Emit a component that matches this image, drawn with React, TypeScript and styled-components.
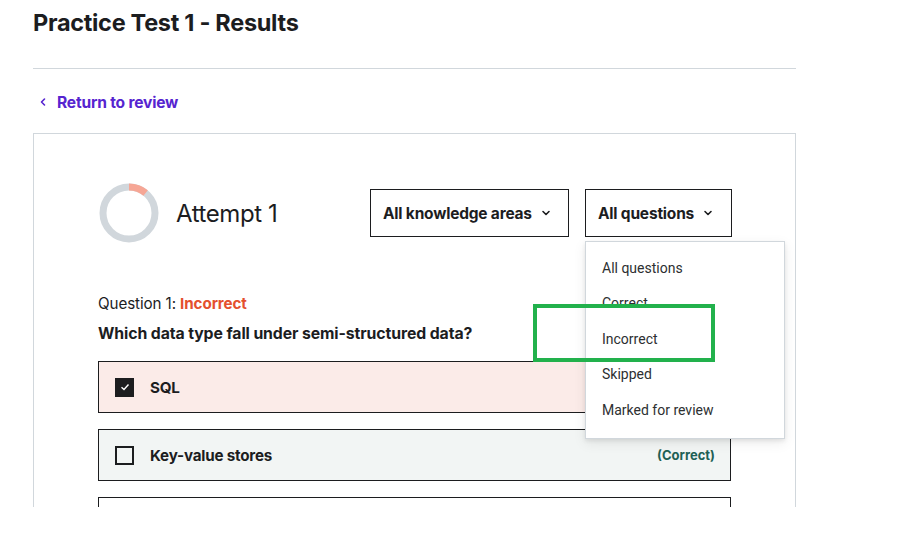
import styled, { createGlobalStyle } from "styled-components";

const GlobalStyle = createGlobalStyle`
  html, body { margin: 0; padding: 0; background: #fff; }
  body { font-family: Inter, "Noto Sans", sans-serif; color: #2d2f31; }
  * { box-sizing: border-box; }
`;

const Page = styled.div`
  width: 903px;
  height: 507px;
  overflow: hidden;
  padding: 0 107px 0 33px;
  position: relative;
`;

const Title = styled.h1`
  margin: 0;
  padding-top: 8px;
  height: 69px;
  font-size: 23.5px;
  font-weight: 700;
  letter-spacing: -0.3px;
  color: #1c1d1f;
  border-bottom: 1px solid #d1d7dc;
`;

const BackLink = styled.a`
  display: flex;
  align-items: center;
  gap: 9px;
  height: 64px;
  padding-left: 5px;
  padding-top: 2px;
  color: #5624d0;
  font-size: 15.6px;
  font-weight: 700;
  letter-spacing: -0.2px;
  text-decoration: none;
`;

const Card = styled.div`
  border: 1px solid #d1d7dc;
  border-bottom: none;
  padding: 49px 64px 0 64px;
  min-height: 400px;
`;

const Header = styled.div`
  display: flex;
  align-items: center;
  height: 60px;
  margin-right: -1px;
`;

const AttemptLabel = styled.div`
  flex: 1;
  display: flex;
  align-items: center;
  gap: 16px;
  font-size: 24px;
  font-weight: 400;
  letter-spacing: -0.4px;
  color: #1c1d1f;
`;

const Filters = styled.div`
  display: flex;
  gap: 16px;
`;

const DropWrap = styled.div`
  position: relative;
`;

const DropButton = styled.button<{ $w: number }>`
  display: flex;
  align-items: center;
  gap: 9px;
  width: ${(p) => p.$w}px;
  height: 48px;
  padding: 0 0 0 12px;
  border: 1px solid #1c1d1f;
  background: #fff;
  font-family: inherit;
  font-size: 15.5px;
  font-weight: 700;
  letter-spacing: -0.2px;
  color: #1c1d1f;
`;

const Menu = styled.ul`
  position: absolute;
  top: 52px;
  left: 0;
  width: 200px;
  margin: 0;
  padding: 8px 0 10px;
  list-style: none;
  background: #fff;
  border: 1px solid #d1d7dc;
  box-shadow: 0 2px 4px rgba(0, 0, 0, 0.08), 0 4px 12px rgba(0, 0, 0, 0.08);
  z-index: 2;
`;

const MenuItem = styled.li`
  height: 35.5px;
  display: flex;
  align-items: center;
  padding-left: 16px;
  font-family: Roboto, "Noto Sans", sans-serif;
  font-size: 14px;
  color: #2d2f31;
`;

const Highlight = styled.div`
  position: absolute;
  left: 533px;
  top: 304px;
  width: 182px;
  height: 58px;
  border: 4px solid #22b14c;
  z-index: 3;
`;

const Status = styled.div`
  margin-top: 51px;
  font-size: 15.2px;
  letter-spacing: -0.1px;
  color: #1c1d1f;
`;

const StatusBad = styled.span`
  color: #e4502e;
  font-weight: 700;
`;

const Question = styled.div`
  margin-top: 11px;
  font-size: 15.8px;
  font-weight: 700;
  letter-spacing: -0.1px;
  color: #1c1d1f;
`;

const Options = styled.div`
  margin-top: 18px;
  display: flex;
  flex-direction: column;
  gap: 16px;
`;

const Option = styled.div<{ $tone?: "bad" | "good" }>`
  display: flex;
  align-items: center;
  height: 52px;
  padding: 0 15px 0 16px;
  border: 1px solid #1c1d1f;
  background: ${(p) =>
    p.$tone === "bad" ? "#fbebe8" : p.$tone === "good" ? "#f2f5f4" : "#fff"};
`;

const Box = styled.span<{ $checked?: boolean }>`
  width: 19px;
  height: 19px;
  flex: none;
  display: flex;
  align-items: center;
  justify-content: center;
  border: 2px solid #1c1d1f;
  background: ${(p) => (p.$checked ? "#1c1d1f" : "transparent")};
`;

const OptionText = styled.span`
  flex: 1;
  margin-left: 16px;
  font-size: 15.2px;
  font-weight: 700;
  letter-spacing: -0.2px;
  color: #1c1d1f;
`;

const CorrectTag = styled.span`
  font-size: 13px;
  font-weight: 700;
  color: #1e6055;
`;

const Chevron = ({ dir }: { dir: "down" | "left" }) => (
  <svg width="10" height="10" viewBox="0 0 10 10" fill="none">
    <path
      d={dir === "down" ? "M2 3.5 L5 6.5 L8 3.5" : "M6.5 2 L3.5 5 L6.5 8"}
      stroke="currentColor"
      strokeWidth="1.6"
      strokeLinecap="round"
      strokeLinejoin="round"
    />
  </svg>
);

const Donut = () => {
  const r = 26;
  const c = 2 * Math.PI * r;
  const part = c * 0.11;
  return (
    <svg width="62" height="62" viewBox="0 0 62 62">
      <circle cx="31" cy="31" r={r} fill="none" stroke="#d1d7dc" strokeWidth="7" />
      <circle
        cx="31"
        cy="31"
        r={r}
        fill="none"
        stroke="#f6a695"
        strokeWidth="7"
        strokeDasharray={`${part} ${c}`}
        transform="rotate(-90 31 31)"
      />
    </svg>
  );
};

const menuItems = ["All questions", "Correct", "Incorrect", "Skipped", "Marked for review"];

export default function App() {
  return (
    <Page>
      <GlobalStyle />
      <Title>Practice Test 1 - Results</Title>
      <BackLink href="#">
        <Chevron dir="left" />
        Return to review
      </BackLink>
      <Card>
        <Header>
          <AttemptLabel>
            <Donut />
            Attempt 1
          </AttemptLabel>
          <Filters>
            <DropButton $w={199}>
              All knowledge areas <Chevron dir="down" />
            </DropButton>
            <DropWrap>
              <DropButton $w={147}>
                All questions <Chevron dir="down" />
              </DropButton>
              <Menu>
                {menuItems.map((m) => (
                  <MenuItem key={m}>{m}</MenuItem>
                ))}
              </Menu>
            </DropWrap>
          </Filters>
        </Header>
        <Status>
          Question 1: <StatusBad>Incorrect</StatusBad>
        </Status>
        <Question>Which data type fall under semi-structured data?</Question>
        <Options>
          <Option $tone="bad">
            <Box $checked>
              <svg width="10" height="10" viewBox="0 0 10 10" fill="none">
                <path d="M1.5 5.2 L4 7.5 L8.5 2.5" stroke="#fff" strokeWidth="1.4" />
              </svg>
            </Box>
            <OptionText>SQL</OptionText>
          </Option>
          <Option $tone="good">
            <Box />
            <OptionText>Key-value stores</OptionText>
            <CorrectTag>(Correct)</CorrectTag>
          </Option>
          <Option />
        </Options>
      </Card>
      <Highlight />
    </Page>
  );
}
